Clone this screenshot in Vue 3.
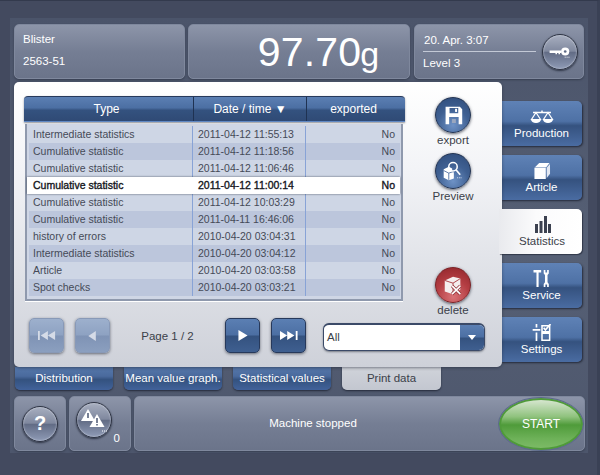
<template>
  <div class="screen">
    <div class="frame">
      <header class="top-row">
        <div class="card info">
          <span>Blister</span>
          <span>2563-51</span>
        </div>
        <div class="card weight">
          <span class="value">97.70</span><span class="unit">g</span>
        </div>
        <div class="card level">
          <div class="level-text">
            <span class="level-date">20. Apr. 3:07</span>
            <span>Level 3</span>
          </div>
          <button class="glass key">
            <svg viewBox="0 0 36 36" width="36" height="36">
              <path d="M7 16.500h12.500v2.500H18v1.500h-1.600V19h-1.600v1.500h-1.600V19H7z" fill="#fff" />
              <circle cx="23.500" cy="17.500" r="4.300" fill="#fff" />
              <circle cx="23.500" cy="17.500" r="1.400" fill="#5d6a85" />
              <path d="M23 23.500h1M25 23.500h1M27 23.500h1" stroke="#fff" stroke-width="1" />
            </svg>
          </button>
        </div>
      </header>

      <section class="workspace">
        <div class="left-col">
          <div class="dialog">
            <div class="dialog-main">
              <div class="table-wrap">
                <div class="thead">
                  <div class="th c-type">Type</div>
                  <div class="th c-date">Date / time ▼</div>
                  <div class="th c-exp">exported</div>
                </div>
                <div class="tbody">
                  <div v-for="(row, i) in rows" :key="i" class="tr" :class="{ odd: i % 2 === 1, selected: i === 3 }">
                    <div class="c-type td">{{ row[0] }}</div>
                    <div class="c-date td">{{ row[1] }}</div>
                    <div class="td no">No</div>
                  </div>
                </div>
              </div>

              <div class="controls">
                <button class="page-btn off">
                  <svg viewBox="0 0 20 10" width="18" height="9"><path d="M0 0h2v10H0zM11 0v10L3 5zM19 0v10l-8-5z" fill="#d5dbe7" /></svg>
                </button>
                <button class="page-btn off">
                  <svg viewBox="0 0 10 12" width="9" height="10"><path d="M9 0v12L0 6z" fill="#d5dbe7" /></svg>
                </button>
                <span class="page-label">Page 1 / 2</span>
                <button class="page-btn">
                  <svg viewBox="0 0 10 12" width="10" height="11"><path d="M0 0v12l10-6z" fill="#fff" /></svg>
                </button>
                <button class="page-btn">
                  <svg viewBox="0 0 20 10" width="18" height="9"><path d="M0 0v10l8-5zM8 0v10l8-5zM17.500 0h2v10h-2z" fill="#fff" /></svg>
                </button>
                <div class="select">
                  <span class="select-text">All</span>
                  <span class="select-arrow"><i></i></span>
                </div>
              </div>
            </div>

            <div class="actions">
              <div class="action">
                <button class="round blue">
                  <svg viewBox="0 0 24 24" width="19" height="19">
                    <path fill-rule="evenodd" d="M2 1h18l3 3v19H2zM7 2.500v6.500h11V2.500zM6.500 14v9h12v-9z" fill="#fff" />
                    <rect x="14" y="3.500" width="2.500" height="4" fill="#fff" />
                    <rect x="10" y="16.500" width="5" height="5" fill="#9aa7bf" />
                  </svg>
                </button>
                <span>export</span>
              </div>
              <div class="action second">
                <button class="round blue">
                  <svg viewBox="0 0 26 26" width="22" height="22">
                    <path d="M2 11l6-3 4 2v2.500l2 2.500v7l-6 2-6-3z" fill="#fff" />
                    <path d="M8 15.500v8M2 12.500l6 3 6-2" stroke="#4a6a9d" stroke-width="1" fill="none" />
                    <circle cx="13" cy="8" r="5" fill="none" stroke="#fff" stroke-width="1.800" />
                    <path d="M16.500 11.500l5 6" stroke="#fff" stroke-width="2" />
                    <path d="M18 21h1M20 21h1M22 21h1" stroke="#fff" />
                  </svg>
                </button>
                <span>Preview</span>
              </div>
              <div class="action third">
                <button class="round red">
                  <svg viewBox="0 0 24 24" width="22" height="22">
                    <path d="M3 7l9-4 8 2v12l-8 5-9-3z" fill="#f4eeee" />
                    <path d="M3 7l9 3 8-5M12 10v12" stroke="#a83a3f" stroke-width="1" fill="none" />
                    <path d="M11 13l9 9M20 13l-9 9" stroke="#8d2a30" stroke-width="3.400" />
                    <path d="M11 13l9 9M20 13l-9 9" stroke="#fff" stroke-width="1.800" />
                  </svg>
                </button>
                <span>delete</span>
              </div>
            </div>
          </div>

          <div class="tabs">
            <div class="tab">Distribution</div>
            <div class="tab">Mean value graph.</div>
            <div class="tab">Statistical values</div>
            <div class="tab active">Print data</div>
          </div>
        </div>

        <nav class="nav">
          <div class="nav-item">
            <svg viewBox="0 0 24 14" width="24" height="14">
              <path d="M12 1v2M3 3h18" stroke="#fff" stroke-width="1.500" />
              <path d="M6 3L1.500 10h9zM18 3l-4.500 7h9z" fill="none" stroke="#fff" stroke-width="1.200" />
              <path d="M1 10h10a5 3.500 0 0 1-10 0zM13 10h10a5 3.500 0 0 1-10 0z" fill="#fff" />
            </svg>
            <span>Production</span>
          </div>
          <div class="nav-item">
            <svg viewBox="0 0 18 18" width="18" height="18">
              <path d="M1 6h12v12H1z" fill="#fff" />
              <path d="M1.500 5.500L6 1h11l-3.500 4.500z" fill="#fff" />
              <path d="M14 6l3.500-4v10.500L14 17z" fill="#e3e8f2" />
            </svg>
            <span>Article</span>
          </div>
          <div class="nav-item current">
            <svg viewBox="0 0 17 17" width="17" height="17">
              <path d="M1 8h3v9H1zM5.500 5h3v12h-3zM10 0h3v17h-3zM14 8h3v9h-3z" fill="#3c4150" />
            </svg>
            <span>Statistics</span>
          </div>
          <div class="nav-item">
            <svg viewBox="0 0 20 20" width="20" height="20">
              <path d="M0 0h9v3H6v17H3.500V3H0z" fill="#fff" />
              <path d="M12 0v4l1.500 2v8.500L12 16.500V20h2v-3h2v3h2v-3.500l-1.500-2V6L18 4V0h-2v3h-2V0z" fill="#fff" />
            </svg>
            <span>Service</span>
          </div>
          <div class="nav-item">
            <svg viewBox="0 0 22 20" width="22" height="20">
              <path d="M3.500 0h2v4h-2zM0 6h9v2H0zM3.500 10h2v10h-2z" fill="#fff" />
              <path d="M11 2h9v7h-9zM11 11h9v8h-9z" fill="none" stroke="#fff" stroke-width="1.800" />
              <path d="M13 4.500l2 2.500 6-7" fill="none" stroke="#fff" stroke-width="2" />
            </svg>
            <span>Settings</span>
          </div>
        </nav>
      </section>

      <footer class="bottom-row">
        <div class="card help">
          <button class="glass">?</button>
        </div>
        <div class="card warn">
          <button class="glass">
            <svg viewBox="0 0 30 26" width="30" height="26">
              <path d="M9 2l7 12H2z" fill="#fff" />
              <path d="M18 7l7.500 13h-15z" fill="#fff" />
              <path d="M9 6v5" stroke="#56617b" stroke-width="1.600" />
              <path d="M18 11v5M18 17v1.500" stroke="#56617b" stroke-width="1.600" />
              <path d="M23 24h1M25 24h1M27 24h1" stroke="#fff" />
            </svg>
          </button>
          <span class="count">0</span>
        </div>
        <div class="card status">
          <span class="status-text">Machine stopped</span>
          <button class="start">START</button>
        </div>
      </footer>
    </div>
  </div>
</template>

<script setup>
const rows = [
  ['Intermediate statistics', '2011-04-12 11:55:13'],
  ['Cumulative statistic', '2011-04-12 11:18:56'],
  ['Cumulative statistic', '2011-04-12 11:06:46'],
  ['Cumulative statistic', '2011-04-12 11:00:14'],
  ['Cumulative statistic', '2011-04-12 10:03:29'],
  ['Cumulative statistic', '2011-04-11 16:46:06'],
  ['history of errors', '2010-04-20 03:04:31'],
  ['Intermediate statistics', '2010-04-20 03:04:12'],
  ['Article', '2010-04-20 03:03:58'],
  ['Spot checks', '2010-04-20 03:03:21']
]
</script>

<style>
html, body {
  margin: 0;
  background: #444b60;
}
</style>

<style scoped>
.screen {
  width: 600px;
  height: 475px;
  box-sizing: border-box;
  padding-top: 1px;
  overflow: hidden;
  background: #434a5f;
  font-family: "Liberation Sans", Arial, sans-serif;
  font-size: 11.5px;
  color: #fff;
  border-right: 3px solid #3a4155;
  border-top: 1px solid #333a4d;
}

.frame {
  box-sizing: border-box;
  width: 578px;
  height: 435px;
  margin: 16px 0 0 10px;
  padding: 6px 3px 0 4px;
  background: linear-gradient(#4b546a, #566075 55%, #4d566c);
}

.top-row {
  display: flex;
  gap: 3px;
  height: 55px;
}

.card {
  box-sizing: border-box;
  border-radius: 5px;
  background: linear-gradient(#8d95a9, #757e94 50%, #6b748a);
  border: 1px solid #7f889d;
  box-shadow: 0 1px 2px rgba(40, 46, 62, 0.6);
}

.info {
  width: 171px;
  padding: 8px;
  display: flex;
  flex-direction: column;
  gap: 10px;
  line-height: 12px;
}

.weight {
  width: 222px;
  display: flex;
  align-items: baseline;
  justify-content: center;
  padding-top: 2px;
  padding-left: 39px;
}

.value {
  font-size: 41px;
  line-height: 50px;
  letter-spacing: 0.2px;
}

.unit {
  font-size: 34px;
  margin-left: -1px;
}

.level {
  width: 170px;
  margin-left: 1px;
  display: flex;
  align-items: center;
  padding: 0 5px 0 8px;
  justify-content: space-between;
}

.level-text {
  display: flex;
  flex-direction: column;
  width: 113px;
  line-height: 12px;
}

.level-date {
  padding: 0 0 5px 1px;
  margin-bottom: 5px;
  border-bottom: 1px solid #c3c9d6;
}

.glass {
  width: 36px;
  height: 36px;
  padding: 0;
  border: 1px solid #2e3444;
  border-radius: 50%;
  background: linear-gradient(#a8afc0, #7f889e 48%, #616b84 50%, #8f9bb6);
  box-shadow: 0 1px 2px rgba(20, 25, 40, 0.7), inset 0 0 2px #dfe3ec;
  display: flex;
  align-items: center;
  justify-content: center;
  color: #fff;
  font: bold 20px "Liberation Sans", Arial, sans-serif;
}

.workspace {
  display: flex;
  margin-top: 3px;
  height: 308px;
}

.left-col {
  width: 488px;
  position: relative;
  z-index: 1;
}

.dialog {
  position: relative;
  z-index: 2;
  box-sizing: border-box;
  height: 285px;
  display: flex;
  background: linear-gradient(#fff, #f3f4f7 30%, #ced1d9);
  border-radius: 5px;
  box-shadow: 0 1px 3px rgba(30, 35, 50, 0.5);
  color: #3b3f49;
}

.dialog-main {
  width: 405px;
  padding: 14px 0 0 10px;
  box-sizing: border-box;
}

.table-wrap {
  width: 381px;
}

.thead {
  display: flex;
  height: 26px;
  border-radius: 4px 4px 0 0;
  background: linear-gradient(#5b7fb3, #4c6fa3 45%, #34527f 55%, #2f4a75);
  border-top: 1px solid #27395b;
  border-bottom: 1px solid #5f88c4;
  box-sizing: border-box;
  box-shadow: 0 1px 2px rgba(30, 35, 50, 0.5);
  color: #fff;
  font-size: 12px;
}

.th {
  display: flex;
  align-items: center;
  justify-content: center;
}

.th.c-type {
  width: 169px;
  padding-right: 4px;
  box-sizing: border-box;
}

.th.c-date {
  width: 113px;
  box-sizing: border-box;
  border-left: 1px solid #1f3252;
}

.th.c-exp {
  width: 99px;
  padding-right: 5px;
  box-sizing: border-box;
  border-left: 1px solid #1f3252;
}

.tbody {
  box-sizing: border-box;
  width: 378px;
  height: 177px;
  margin: 2px 0 0 1px;
  padding: 2px 1px 0 2px;
  border: 1px solid #8f99ad;
  border-width: 0 2px 2px 2px;
  background: #cfd6e5;
  box-shadow: 0 1px 0 #fff;
}

.tr {
  display: flex;
  height: 17px;
  line-height: 17px;
  font-size: 10.500px;
  background: #ced6e5;
  color: #454a57;
}

.tr.odd {
  background: #bcc6dc;
}

.tr.selected {
  background: #fff;
  color: #14161c;
  -webkit-text-stroke: 0.35px #14161c;
  margin-left: -2px;
  box-shadow: 0 0 2px rgba(30, 35, 50, 0.7);
  position: relative;
}

.td.c-type {
  width: 164px;
  box-sizing: border-box;
  padding-left: 4px;
  border-right: 1px solid #88a3d6;
}

.td.c-date {
  width: 113px;
  box-sizing: border-box;
  padding-left: 5px;
  border-right: 1px solid #88a3d6;
  white-space: nowrap;
}

.tr.selected .td {
  border-right-color: transparent;
}

.tr.selected .c-type {
  width: 166px;
  padding-left: 6px;
}

.td.no {
  flex: 1;
  text-align: right;
  padding-right: 5px;
}

.controls {
  display: flex;
  align-items: center;
  width: 470px;
  margin-top: 17px;
  padding-left: 5px;
  height: 35px;
  position: relative;
}

.page-btn {
  flex: none;
  width: 35px;
  height: 35px;
  margin-right: 11px;
  padding: 0;
  display: flex;
  align-items: center;
  justify-content: center;
  border: 1px solid #27395b;
  border-radius: 5px;
  background: linear-gradient(#5b7fb3, #4c6fa3 48%, #34527f 52%, #3f5f90);
  box-shadow: 0 1px 3px rgba(30, 35, 50, 0.6);
}

.page-btn.off {
  background: linear-gradient(#9db0cd, #8ea2c2 48%, #7f93b5 52%, #8b9fbf);
  border-color: #8899b7;
}

.page-label {
  flex: none;
  width: 104px;
  padding-right: 11px;
  box-sizing: border-box;
  text-align: center;
  color: #3b3f49;
}

.select {
  flex: none;
  display: flex;
  width: 162px;
  height: 28px;
  margin: 3px 0 0 6px;
  box-sizing: border-box;
  border-radius: 6px;
  overflow: hidden;
  background: #fff;
  border: 1px solid #3b4a68;
  border-top-width: 2px;
  box-shadow: 0 1px 2px rgba(30, 35, 50, 0.5);
}

.select-text {
  flex: 1;
  padding-left: 3px;
  line-height: 25px;
  color: #3b3f49;
}

.select-arrow {
  width: 24px;
  display: flex;
  align-items: center;
  justify-content: center;
  background: linear-gradient(#5b7fb3, #4c6fa3 48%, #34527f 52%, #3f5f90);
}

.select-arrow i {
  width: 0;
  height: 0;
  border: 4px solid transparent;
  border-top: 5px solid #fff;
  border-bottom-width: 0;
}

.actions {
  width: 68px;
  padding-top: 15px;
  display: flex;
  flex-direction: column;
  align-items: center;
  box-sizing: border-box;
  color: #3b3f49;
}

.action {
  display: flex;
  flex-direction: column;
  align-items: center;
  line-height: 12px;
  gap: 1px;
}

.action.second {
  margin-top: 7px;
}

.action.third {
  margin-top: 65px;
}

.round {
  width: 36px;
  height: 36px;
  padding: 0;
  display: flex;
  align-items: center;
  justify-content: center;
  border-radius: 50%;
  border: 1px solid #223352;
  box-shadow: 0 1px 3px rgba(30, 35, 50, 0.7);
}

.round.blue {
  background: radial-gradient(circle at 50% 80%, #6e92c6, #3f6092 50%, #2e4b79);
}

.round.red {
  border-color: #7a2226;
  background: radial-gradient(circle at 50% 85%, #d97276, #b43e43 50%, #8f2329);
}

.tabs {
  display: flex;
  gap: 11px;
  height: 23px;
  padding-left: 1px;
}

.tab {
  width: 98px;
  height: 23px;
  box-sizing: border-box;
  text-align: center;
  line-height: 22px;
  white-space: nowrap;
  border-radius: 0 0 5px 5px;
  background: linear-gradient(#5577aa, #4a6a9d 40%, #34527f 55%, #41629a);
  box-shadow: 0 1px 2px rgba(25, 30, 45, 0.8);
}

.tab.active {
  width: 99px;
  background: linear-gradient(#d0d3da, #c3c7d0);
  color: #3b3f49;
}

.nav {
  width: 80px;
  margin-top: 19px;
  display: flex;
  flex-direction: column;
  gap: 9px;
}

.nav-item {
  box-sizing: border-box;
  height: 45px;
  margin-left: -1px;
  padding-top: 7px;
  display: flex;
  flex-direction: column;
  align-items: center;
  justify-content: flex-start;
  gap: 2px;
  line-height: 13px;
  border-radius: 0 5px 5px 0;
  background: linear-gradient(#5f82b6, #4e71a5 45%, #35527f 55%, #4a6ca2);
  box-shadow: 1px 1px 2px rgba(25, 30, 45, 0.8);
}

.nav-item svg {
  height: 17px;
}

.nav-item.current {
  position: relative;
  z-index: 3;
  margin-left: -3px;
  padding-left: 3px;
  background: linear-gradient(90deg, #e9eaee, #fbfbfc 45%, #fff);
  box-shadow: 1px 1px 1px rgba(25, 30, 45, 0.6);
  color: #3b3f49;
}

.bottom-row {
  display: flex;
  gap: 3px;
  height: 55px;
  margin-top: 6px;
}

.help {
  width: 52px;
  display: flex;
  align-items: center;
  justify-content: center;
}

.warn {
  width: 62px;
  position: relative;
  padding: 5px 0 0 6px;
}

.count {
  position: absolute;
  right: 10px;
  bottom: 6px;
  line-height: 12px;
}

.status {
  flex: 1;
  display: flex;
  align-items: center;
}

.status-text {
  flex: 1;
  padding: 0 8px 2px 0;
  text-align: center;
}

.start {
  width: 84px;
  height: 52px;
  margin-right: 1px;
  padding: 0;
  border-radius: 50%;
  border: 2px solid #4f9a3a;
  outline: 1px solid #5c6a8c;
  background: linear-gradient(#d6e6cf, #8fc27d 35%, #4f9b3a 52%, #6db158 80%, #7cba66);
  color: #fff;
  font: 12px "Liberation Sans", Arial, sans-serif;
}
</style>
